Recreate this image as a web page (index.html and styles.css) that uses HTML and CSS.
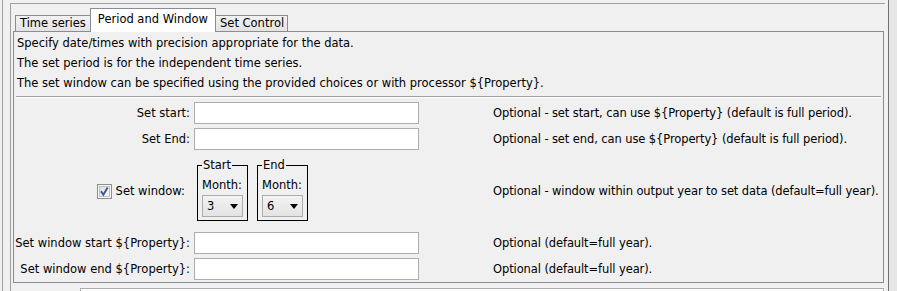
FILE: index.html
```html
<!DOCTYPE html>
<html>
<head>
<meta charset="utf-8">
<title>Set Command - Period and Window</title>
<link rel="stylesheet" href="styles.css">
</head>
<body>
<div class="win">
	<div class="main">
		<div class="edge">
			<div class="box">
				<div class="tabs">
					<div class="tab">Time series</div>
					<div class="tab tab-sel">Period and Window</div>
					<div class="tab">Set Control</div>
				</div>
				<div class="panel">
					<div class="notes">
						<p>Specify date/times with precision appropriate for the data.</p>
						<p>The set period is for the independent time series.</p>
						<p>The set window can be specified using the provided choices or with processor ${Property}.</p>
					</div>
					<div class="sep"></div>
					<div class="form">
						<label class="lbl">Set start:</label>
						<input class="txt" type="text">
						<span class="desc">Optional - set start, can use ${Property} (default is full period).</span>

						<label class="lbl">Set End:</label>
						<input class="txt" type="text">
						<span class="desc">Optional - set end, can use ${Property} (default is full period).</span>

						<label class="lbl lbl-chk">
							<svg class="chk" width="15" height="15" viewBox="0 0 15 15">
								<defs>
									<linearGradient id="chkbg" x1="0" y1="0" x2="1" y2="1">
										<stop offset="0" stop-color="#dcdcdc"/>
										<stop offset="1" stop-color="#fbfbfb"/>
									</linearGradient>
								</defs>
								<rect x="0.5" y="0.5" width="14" height="14" fill="#f4f4f4" stroke="#8f8f8f"/>
								<rect x="2.5" y="2.5" width="10" height="10" fill="url(#chkbg)" stroke="#c4c4c4"/>
								<path d="M4 7.2 L6.4 10.8 L10.6 3.6" fill="none" stroke="#3f5591" stroke-width="1.9"/>
							</svg>
							Set window:
						</label>
						<div class="groups">
							<fieldset class="grp">
								<legend>Start</legend>
								<div class="grp-lbl">Month:</div>
								<div class="combo"><span>3</span><i class="arrow"></i></div>
							</fieldset>
							<fieldset class="grp">
								<legend>End</legend>
								<div class="grp-lbl">Month:</div>
								<div class="combo"><span>6</span><i class="arrow"></i></div>
							</fieldset>
						</div>
						<span class="desc">Optional - window within output year to set data (default=full year).</span>

						<label class="lbl">Set window start ${Property}:</label>
						<input class="txt" type="text">
						<span class="desc">Optional (default=full year).</span>

						<label class="lbl">Set window end ${Property}:</label>
						<input class="txt" type="text">
						<span class="desc">Optional (default=full year).</span>
					</div>
				</div>
				<div class="below">
					<div class="field"></div>
				</div>
			</div>
		</div>
	</div>
	<div class="vbar"></div>
</div>
</body>
</html>
```

FILE: styles.css
```css
*,*:before,*:after{
	padding: 0;
	margin: 0;
	box-sizing: border-box;
}
html,body{
	width: 897px;
	height: 291px;
	overflow: hidden;
}
body{
	background-color: #f0f0f0;
	color: #000;
	font-family: "DejaVu Sans", Verdana, sans-serif;
	font-size: 11.5px;
}
.win{
	display: flex;
	height: 291px;
	overflow: hidden;
}
.main{
	flex: 1;
	padding-left: 2px;
}
.vbar{
	width: 9px;
	border-left: 1px solid #6f6f6f;
	background-color: #e6e6e6;
}
.edge{
	height: 100%;
	border-left: 1px solid #a0a0a0;
	padding: 3px 3px 0 7px;
}
.box{
	height: 100%;
	border-left: 1px solid #a0a0a0;
	border-top: 1px solid #a0a0a0;
	padding: 4px 1px 0 2px;
	overflow: hidden;
}

/* tabs */
.tabs{
	display: flex;
	align-items: flex-end;
	height: 24px;
	padding-left: 2px;
	margin-bottom: -1px;
	position: relative;
	z-index: 1;
}
.tab{
	height: 16px;
	margin-bottom: 1px;
	padding: 0 4px;
	line-height: 14px;
	border: 1px solid #898c95;
	border-bottom: none;
	background: linear-gradient(#f2f2f2, #e3e3e3);
	white-space: nowrap;
}
.tab:last-child{
	padding: 0 3px 0 4px;
}
.tab-sel{
	height: 24px;
	margin: 0 -1px;
	padding: 3px 7px 0;
	background: #fff;
	position: relative;
}
.panel{
	height: 252px;
	border: 1px solid #898c95;
}
.notes{
	padding: 1px 0 0 3px;
}
.notes p{
	line-height: 20px;
	white-space: nowrap;
}
.sep{
	height: 2px;
	margin: 3px 2px 0;
	border-top: 1px solid #a0a0a0;
	border-bottom: 1px solid #fff;
}

/* form */
.form{
	display: grid;
	grid-template-columns: 176px 225px 1fr;
	grid-template-rows: 22px 22px 74px 22px 22px;
	column-gap: 4px;
	row-gap: 4px;
	align-items: center;
	padding-top: 4px;
}
.lbl{
	text-align: right;
	white-space: nowrap;
}
.lbl-chk{
	display: flex;
	align-items: center;
	justify-content: flex-end;
	gap: 4px;
	padding-right: 5px;
}
.txt{
	height: 22px;
	width: 225px;
	border: 1px solid #abadb3;
	background: #fff;
	font: inherit;
	padding: 0 3px;
}
.desc{
	padding-left: 70px;
	letter-spacing: -0.1px;
	white-space: nowrap;
}
.groups{
	display: flex;
	gap: 9px;
	padding-left: 3px;
	align-self: start;
	margin-top: 5px;
}
.grp{
	border: 1px solid #000;
	padding: 5px 4px 3px 4px;
	min-width: 0;
}
.grp legend{
	line-height: 13px;
	padding: 0 1px;
}
.grp-lbl{
	line-height: 16px;
}
.combo{
	display: flex;
	align-items: center;
	justify-content: space-between;
	width: 41px;
	height: 22px;
	margin-top: 2px;
	padding: 0 4px 0 4px;
	border: 1px solid #acacac;
	background: linear-gradient(#f3f3f3, #e3e3e3);
}
.arrow{
	width: 0;
	height: 0;
	border-left: 4.5px solid transparent;
	border-right: 4.5px solid transparent;
	border-top: 5px solid #000;
}

/* next component, cut off at the bottom */
.below{
	padding: 5px 0 0 67px;
}
.field{
	height: 20px;
	border: 1px solid #abadb3;
	background: #fff;
}
```
